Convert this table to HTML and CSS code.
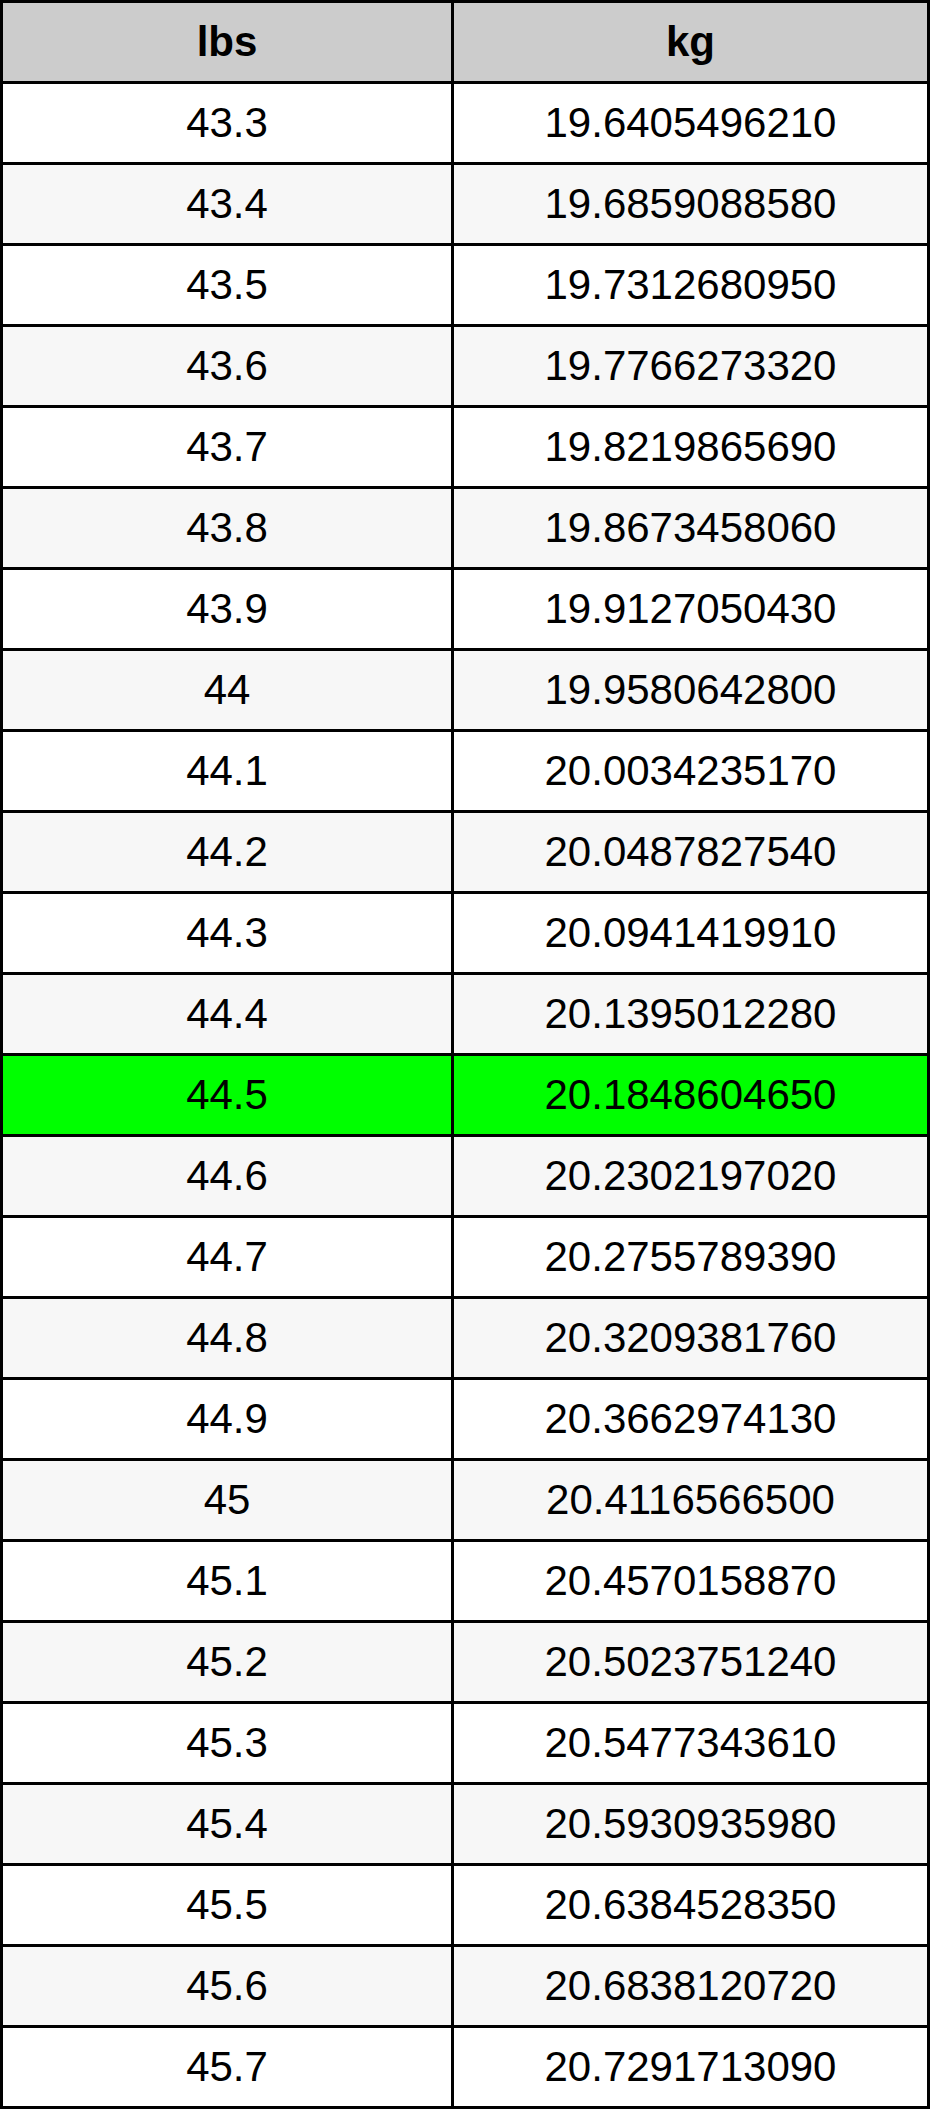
FILE: index.html
```html
<!DOCTYPE html>
<html lang="en">
<head>
<meta charset="utf-8">
<title>lbs to kg</title>
<link rel="stylesheet" href="styles.css">
</head>
<body>
<table class="conv">
  <colgroup><col class="c-lbs"><col class="c-kg"></colgroup>
  <thead>
    <tr><th>lbs</th><th>kg</th></tr>
  </thead>
  <tbody>
    <tr><td>43.3</td><td>19.6405496210</td></tr>
    <tr><td>43.4</td><td>19.6859088580</td></tr>
    <tr><td>43.5</td><td>19.7312680950</td></tr>
    <tr><td>43.6</td><td>19.7766273320</td></tr>
    <tr><td>43.7</td><td>19.8219865690</td></tr>
    <tr><td>43.8</td><td>19.8673458060</td></tr>
    <tr><td>43.9</td><td>19.9127050430</td></tr>
    <tr><td>44</td><td>19.9580642800</td></tr>
    <tr><td>44.1</td><td>20.0034235170</td></tr>
    <tr><td>44.2</td><td>20.0487827540</td></tr>
    <tr><td>44.3</td><td>20.0941419910</td></tr>
    <tr><td>44.4</td><td>20.1395012280</td></tr>
    <tr class="hl"><td>44.5</td><td>20.1848604650</td></tr>
    <tr><td>44.6</td><td>20.2302197020</td></tr>
    <tr><td>44.7</td><td>20.2755789390</td></tr>
    <tr><td>44.8</td><td>20.3209381760</td></tr>
    <tr><td>44.9</td><td>20.3662974130</td></tr>
    <tr><td>45</td><td>20.4116566500</td></tr>
    <tr><td>45.1</td><td>20.4570158870</td></tr>
    <tr><td>45.2</td><td>20.5023751240</td></tr>
    <tr><td>45.3</td><td>20.5477343610</td></tr>
    <tr><td>45.4</td><td>20.5930935980</td></tr>
    <tr><td>45.5</td><td>20.6384528350</td></tr>
    <tr><td>45.6</td><td>20.6838120720</td></tr>
    <tr><td>45.7</td><td>20.7291713090</td></tr>
  </tbody>
</table>
</body>
</html>
```
FILE: styles.css
```css
html, body {
  margin: 0;
  padding: 0;
  background: #ffffff;
}

.conv {
  width: 930px;
  table-layout: fixed;
  border-collapse: separate;
  border-spacing: 3px;
  background: #000000;
  font-family: "Liberation Sans", Arial, sans-serif;
  font-size: 42px;
  color: #000000;
}

.c-lbs { width: 448px; }
.c-kg { width: 473px; }

.conv th,
.conv td {
  height: 78px;
  padding: 0;
  text-align: center;
  vertical-align: middle;
  line-height: normal;
}

.conv th {
  background: #cccccc;
  font-weight: bold;
}

.conv td {
  background: #ffffff;
}

.conv tbody tr:nth-child(even) td {
  background: #f7f7f7;
}

.conv tbody tr.hl td {
  background: #00ff00;
}
```
